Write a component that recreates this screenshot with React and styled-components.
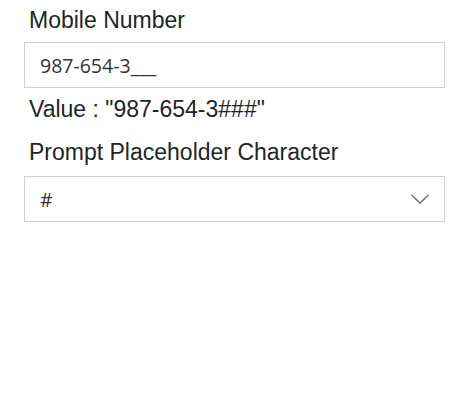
import React, { useState } from 'react';
import styled, { createGlobalStyle } from 'styled-components';

const GlobalStyle = createGlobalStyle`
  body {
    margin: 0;
    background: #fff;
    font-family: "Liberation Sans", Arial, sans-serif;
  }
`;

const Page = styled.div`
  width: 421px;
  padding: 6px 0 0 24px;
`;

const Label = styled.div`
  font-size: 23px;
  line-height: 28px;
  color: #212529;
  padding-left: 5px;
  margin-top: ${props => props.top || 0}px;
`;

const Field = styled.div`
  box-sizing: border-box;
  height: 46px;
  margin-top: ${props => props.top || 0}px;
  border: 1px solid #cfcfcf;
  display: flex;
  align-items: center;
  justify-content: space-between;
  padding: 0 15px 0 15px;
  background: #fff;
`;

const MaskInput = styled.input`
  border: none;
  outline: none;
  padding: 0;
  width: 100%;
  font-family: "Open Sans", "Noto Sans", sans-serif;
  font-size: 19.5px;
  color: #333;
  background: transparent;
`;

const SelectText = styled.span`
  font-family: "Open Sans", "Noto Sans", sans-serif;
  font-size: 19.5px;
  color: #333;
`;

const Chevron = () => (
  <svg width="18" height="10" viewBox="0 0 18 10" fill="none">
    <path d="M0.5 1 L9 9 L17.5 1" stroke="#6b6b6b" strokeWidth="1.4" />
  </svg>
);

export default function App() {
  const [prompt] = useState('#');
  const masked = '987-654-3___';
  const value = masked.replace(/_/g, prompt);

  return (
    <Page>
      <GlobalStyle />
      <Label>Mobile Number</Label>
      <Field top={8}>
        <MaskInput readOnly value={masked} />
      </Field>
      <Label top={7}>Value : "{value}"</Label>
      <Label top={15}>Prompt Placeholder Character</Label>
      <Field top={10}>
        <SelectText>{prompt}</SelectText>
        <Chevron />
      </Field>
    </Page>
  );
}
